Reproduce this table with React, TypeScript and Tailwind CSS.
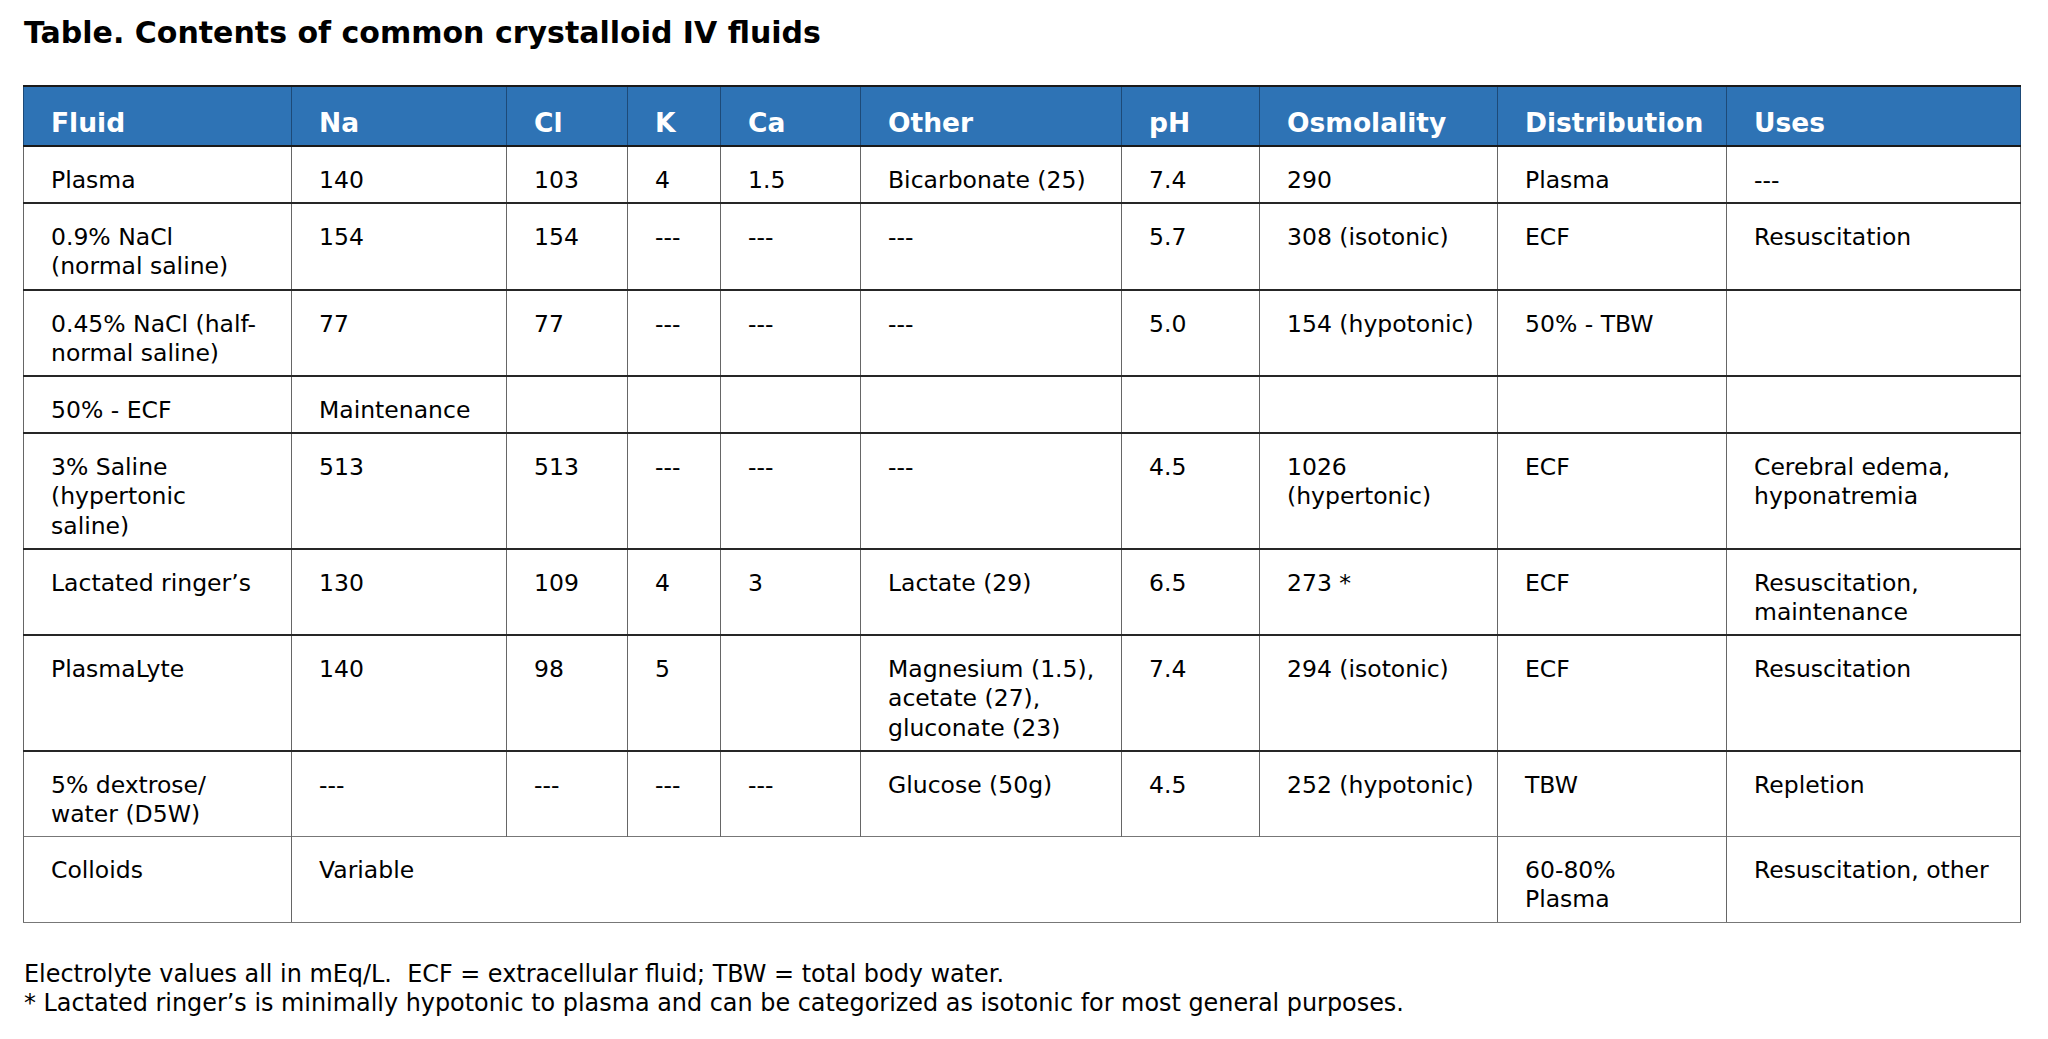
import React from "react";

type Row = { cells: { text: string; span?: number }[]; last?: boolean };

const rows: Row[] = [
  {
    cells: ["Plasma", "140", "103", "4", "1.5", "Bicarbonate (25)", "7.4", "290", "Plasma", "---"].map((t) => ({ text: t })),
  },
  {
    cells: ["0.9% NaCl\n(normal saline)", "154", "154", "---", "---", "---", "5.7", "308 (isotonic)", "ECF", "Resuscitation"].map((t) => ({ text: t })),
  },
  {
    cells: ["0.45% NaCl (half-\nnormal saline)", "77", "77", "---", "---", "---", "5.0", "154 (hypotonic)", "50% - TBW", ""].map((t) => ({ text: t })),
  },
  {
    cells: ["50% - ECF", "Maintenance", "", "", "", "", "", "", "", ""].map((t) => ({ text: t })),
  },
  {
    cells: ["3% Saline\n(hypertonic\nsaline)", "513", "513", "---", "---", "---", "4.5", "1026\n(hypertonic)", "ECF", "Cerebral edema,\nhyponatremia"].map((t) => ({ text: t })),
  },
  {
    cells: ["Lactated ringer\u2019s", "130", "109", "4", "3", "Lactate (29)", "6.5", "273 *", "ECF", "Resuscitation,\nmaintenance"].map((t) => ({ text: t })),
  },
  {
    cells: ["PlasmaLyte", "140", "98", "5", "", "Magnesium (1.5),\nacetate (27),\ngluconate (23)", "7.4", "294 (isotonic)", "ECF", "Resuscitation"].map((t) => ({ text: t })),
  },
  {
    cells: ["5% dextrose/\nwater (D5W)", "---", "---", "---", "---", "Glucose (50g)", "4.5", "252 (hypotonic)", "TBW", "Repletion"].map((t) => ({ text: t })),
  },
  {
    cells: [{ text: "Colloids" }, { text: "Variable", span: 7 }, { text: "60-80%\nPlasma" }, { text: "Resuscitation, other" }],
    last: true,
  },
];

const headers = ["Fluid", "Na", "Cl", "K", "Ca", "Other", "pH", "Osmolality", "Distribution", "Uses"];
const widths = [268, 215, 121, 93, 140, 261, 138, 238, 229, 294];

export default function App() {
  return (
    <div className="min-h-[1039px] w-[2048px] bg-white text-black font-['DejaVu_Sans',sans-serif]">
      <div className="pl-[24px] pt-[15px]">
        <h1 className="text-[30px] leading-[35px] font-bold">Table. Contents of common crystalloid IV fluids</h1>
      </div>
      <div className="pl-[23px] pt-[35px]">
        <table className="table-fixed border-collapse w-[1998px]">
          <colgroup>
            {widths.map((w, i) => (
              <col key={i} style={{ width: w }} />
            ))}
          </colgroup>
          <thead>
            <tr className="bg-[#2e73b5]">
              {headers.map((h, i) => (
                <th
                  key={i}
                  className="text-left align-top font-bold text-white text-[26.5px] leading-[32px] pt-[20px] pb-[6px] pl-[27px] pr-[4px] whitespace-pre border-t-2 border-t-[#1a1a1a] border-b-2 border-b-[#1a1a1a] border-x border-x-[#1d4a78]"
                >
                  {h}
                </th>
              ))}
            </tr>
          </thead>
          <tbody>
            {rows.map((r, ri) => (
              <tr key={ri}>
                {r.cells.map((c, ci) => (
                  <td
                    key={ci}
                    colSpan={c.span}
                    className={
                      r.last
                        ? "align-top text-[23.5px] leading-[29.2px] pt-[19px] pb-[7px] pl-[27px] pr-[4px] whitespace-pre border-t border-t-[#777] border-b border-b-[#777] border-x border-x-[#666]"
                        : "align-top text-[23.5px] leading-[29.2px] pt-[19px] pb-[7px] pl-[27px] pr-[4px] whitespace-pre border-t-2 border-t-[#262626] border-x border-x-[#666]"
                    }
                  >
                    {c.text}
                  </td>
                ))}
              </tr>
            ))}
          </tbody>
        </table>
      </div>
      <div className="pl-[24px] pt-[37px] text-[23.9px] leading-[29.3px]">
        <p className="whitespace-pre">Electrolyte values all in mEq/L.  ECF = extracellular fluid; TBW = total body water.</p>
        <p>* Lactated ringer’s is minimally hypotonic to plasma and can be categorized as isotonic for most general purposes.</p>
      </div>
    </div>
  );
}
